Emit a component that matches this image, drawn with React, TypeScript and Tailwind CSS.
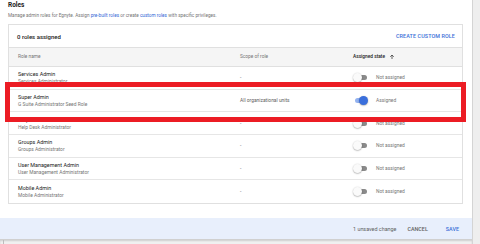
import React from 'react';

interface Role {
  name: string;
  description: string;
  scope: string;
  assigned: boolean;
}

const roles: Role[] = [
  { name: 'Services Admin', description: 'Services Administrator', scope: '-', assigned: false },
  { name: 'Super Admin', description: 'G Suite Administrator Seed Role', scope: 'All organizational units', assigned: true },
  { name: 'Help Desk Admin', description: 'Help Desk Administrator', scope: '-', assigned: false },
  { name: 'Groups Admin', description: 'Groups Administrator', scope: '-', assigned: false },
  { name: 'User Management Admin', description: 'User Management Administrator', scope: '-', assigned: false },
  { name: 'Mobile Admin', description: 'Mobile Administrator', scope: '-', assigned: false },
];

const Toggle: React.FC<{ on: boolean }> = ({ on }) => (
  <div className="relative w-[15px] h-[9px] flex items-center">
    <div className={`ml-[2px] w-[12px] h-[5px] rounded-full ${on ? 'bg-[#94b3f0]' : 'bg-[#8a8a8a]'}`} />
    <div
      className={`absolute top-[0px] w-[9px] h-[9px] rounded-full shadow-[0_0.5px_1.5px_rgba(0,0,0,0.4)] ${
        on ? 'left-[6px] bg-[#3a6fdc]' : 'left-0 bg-[#fafafa]'
      }`}
    />
  </div>
);

const App: React.FC = () => {
  return (
    <div className="w-[480px] h-[244px] flex bg-white overflow-hidden font-['Roboto',sans-serif] text-[#212121]">
      <div className="w-[472px] flex flex-col relative">
        <div className="px-2 pt-[1px]">
          <div className="text-[6.5px] font-bold leading-[9px]">Roles</div>
          <div className="text-[4.7px] text-[#757575] leading-[7px] mt-[2px]">
            Manage admin roles for Egnyte. Assign <span className="text-[#3367d6]">pre-built roles</span> or create{' '}
            <span className="text-[#3367d6]">custom roles</span> with specific privileges.
          </div>
        </div>

        {/* roles card */}
        <div className="mx-2 mt-[5px] w-[455px] border border-[#e0e0e0] flex flex-col">
          <div className="h-[22px] flex items-center justify-between pl-[8px] pr-[7px]">
            <span className="text-[6px] font-medium">0 roles assigned</span>
            <span className="text-[5.4px] font-medium text-[#3b6fd8] tracking-[0.1px]">CREATE CUSTOM ROLE</span>
          </div>
          <div className="h-[20px] bg-[#f5f5f5] border-t border-b border-[#e0e0e0] grid grid-cols-[222px_113px_1fr] items-center pl-[9px] text-[4.8px] text-[#757575]">
            <span>Role name</span>
            <span>Scope of role</span>
            <span className="flex items-center gap-[4px] font-medium text-[#212121]">
              Assigned state
              <svg width="6" height="6" viewBox="0 0 24 24" fill="none" stroke="#333" strokeWidth="3">
                <path d="M12 20V5M5 11l7-7 7 7" />
              </svg>
            </span>
          </div>
          {roles.map((role, i) => (
            <div
              key={role.name}
              className={`h-[22.7px] grid grid-cols-[222px_113px_1fr] items-center pl-[9px] ${
                i < roles.length - 1 ? 'border-b border-[#e6e6e6]' : ''
              }`}
            >
              <div className="flex flex-col">
                <span className="text-[5.4px] leading-[8px]">{role.name}</span>
                <span className="text-[4.9px] leading-[7px] text-[#757575]">{role.description}</span>
              </div>
              <span className="text-[4.9px] text-[#616161]">{role.scope}</span>
              <div className="flex items-center gap-[8px]">
                <Toggle on={role.assigned} />
                <span className="text-[4.9px] text-[#757575]">{role.assigned ? 'Assigned' : 'Not assigned'}</span>
              </div>
            </div>
          ))}
        </div>

        {/* footer */}
        <div className="mt-[14px] h-[21px] bg-[#e8effc] flex items-center justify-end pr-[13px] text-[5.4px]">
          <span className="text-[#616161]">1 unsaved change</span>
          <span className="ml-[11px] font-medium text-[#616161]">CANCEL</span>
          <span className="ml-[18px] font-medium text-[#3b6fd8]">SAVE</span>
        </div>
        <div className="flex-1 bg-[#f2f2f2] border-t border-[#d0d0d0] shadow-[inset_0_1px_2px_rgba(0,0,0,0.15)] pl-[3px]">
          <div className="w-px h-full bg-[#bdbdbd]" />
        </div>

        {/* red highlight annotation */}
        <div className="absolute left-[5px] top-[82px] w-[461px] h-[40px] border-[5px] border-[#ec1c24] pointer-events-none" />
      </div>
      <div className="flex-1 bg-[#eeeeee] border-l border-[#d4d4d4]" />
    </div>
  );
};

export default App;
